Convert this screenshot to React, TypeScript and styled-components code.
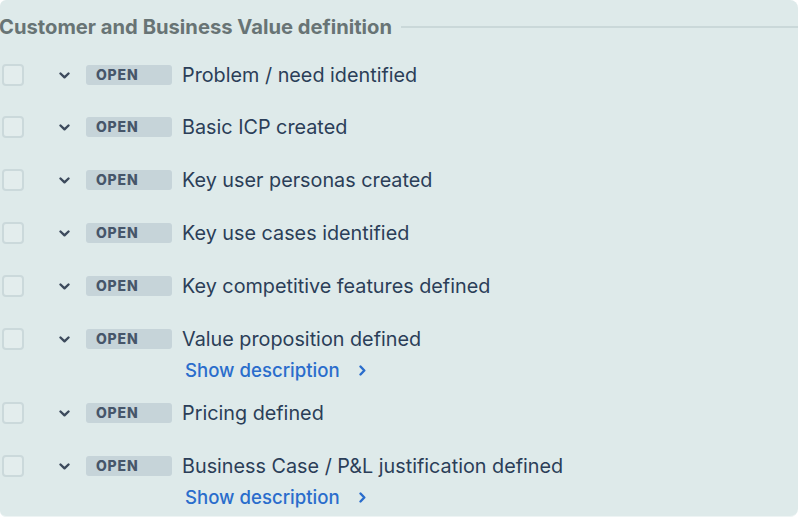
import styled, { createGlobalStyle } from "styled-components";

const GlobalStyle = createGlobalStyle`
  html, body {
    margin: 0;
    padding: 0;
    background: #ffffff;
    width: 800px;
    height: 520px;
    overflow: hidden;
  }
  body {
    font-family: Inter, "Noto Sans", "Liberation Sans", sans-serif;
    -webkit-font-smoothing: antialiased;
  }
`;

const Panel = styled.section`
  width: 798px;
  height: 517px;
  box-sizing: border-box;
  background: #deeaea;
  border-radius: 6px 8px 8px 6px;
  border-bottom: 1px solid #eef4f4;
  overflow: hidden;
  padding: 15px 0 0 2px;
`;

const Header = styled.div`
  display: flex;
  align-items: center;
  gap: 9px;
  height: 24px;
  margin-left: -3px;
  margin-bottom: 10px;
`;

const HeaderTitle = styled.h2`
  margin: 0;
  font-size: 20.2px;
  font-weight: 700;
  color: #687475;
  white-space: nowrap;
  line-height: 24px;
`;

const Rule = styled.div`
  flex: 1;
  height: 2px;
  background: #cad8d9;
`;

const List = styled.ul`
  list-style: none;
  margin: 0;
  padding: 0;
`;

const Item = styled.li`
  padding: 14px 0 15px;

  &:first-child {
    padding-bottom: 14px;
  }
`;

const Row = styled.div`
  display: flex;
  align-items: center;
  height: 24px;
`;

const Checkbox = styled.span`
  width: 18px;
  height: 18px;
  border: 2px solid #cbd9db;
  border-radius: 4px;
  background: #e3eded;
  flex-shrink: 0;
`;

const Toggle = styled.span`
  width: 14px;
  height: 24px;
  display: flex;
  align-items: center;
  justify-content: center;
  margin-left: 33px;
  color: #3c4a5c;
`;

const Badge = styled.span`
  width: 86px;
  height: 20px;
  margin-left: 15px;
  box-sizing: border-box;
  padding-left: 10px;
  border-radius: 3px;
  background: #c6d4d9;
  color: #46566a;
  font-size: 14px;
  font-weight: 800;
  letter-spacing: 0.8px;
  line-height: 20px;
`;

const Title = styled.span`
  margin-left: 10px;
  font-size: 19.8px;
  color: #2b3e58;
  line-height: 24px;
  white-space: nowrap;
`;

const Description = styled.a`
  display: flex;
  align-items: center;
  gap: 19px;
  margin: 8px 0 -9px 183px;
  height: 22px;
  font-size: 18.6px;
  font-weight: 500;
  color: #2a6dcc;
  text-decoration: none;
`;

const ChevronDown = () => (
  <svg width="11" height="7" viewBox="0 0 11 7" fill="none">
    <path d="M1.5 1.5 L5.5 5.3 L9.5 1.5" stroke="currentColor" strokeWidth="2.4" strokeLinecap="round" strokeLinejoin="round" />
  </svg>
);

const ChevronRight = () => (
  <svg width="7" height="11" viewBox="0 0 7 11" fill="none">
    <path d="M1.5 1.5 L5.3 5.5 L1.5 9.5" stroke="currentColor" strokeWidth="2.4" strokeLinecap="round" strokeLinejoin="round" />
  </svg>
);

const items = [
  { title: "Problem / need identified" },
  { title: "Basic ICP created" },
  { title: "Key user personas created" },
  { title: "Key use cases identified" },
  { title: "Key competitive features defined" },
  { title: "Value proposition defined", description: true },
  { title: "Pricing defined" },
  { title: "Business Case / P&L justification defined", description: true },
];

export default function App() {
  return (
    <>
      <GlobalStyle />
      <Panel>
        <Header>
          <HeaderTitle>Customer and Business Value definition</HeaderTitle>
          <Rule />
        </Header>
        <List>
          {items.map((item) => (
            <Item key={item.title}>
              <Row>
                <Checkbox />
                <Toggle>
                  <ChevronDown />
                </Toggle>
                <Badge>OPEN</Badge>
                <Title>{item.title}</Title>
              </Row>
              {item.description && (
                <Description href="#">
                  Show description
                  <ChevronRight />
                </Description>
              )}
            </Item>
          ))}
        </List>
      </Panel>
    </>
  );
}
